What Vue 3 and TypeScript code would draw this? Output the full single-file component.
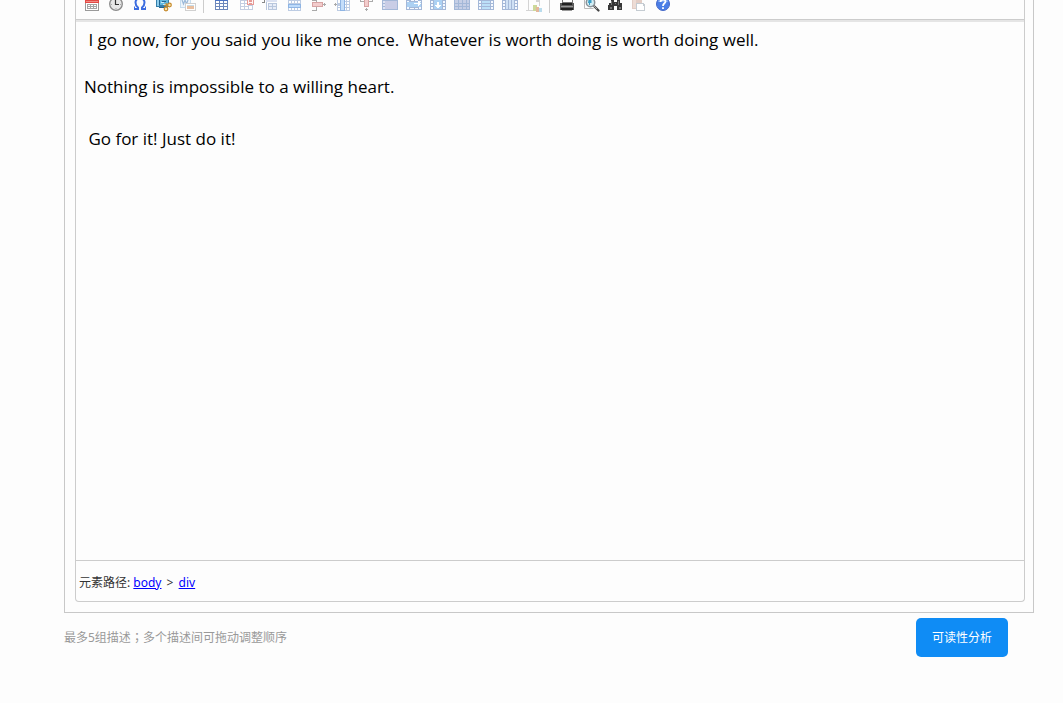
<script setup lang="ts">
import { ref } from 'vue'

interface Tool {
  id: string
  label: string
}

const groups: Tool[][] = [
  [
    { id: 'date', label: '日期' },
    { id: 'time', label: '时间' },
    { id: 'omega', label: '特殊字符' },
    { id: 'snap', label: '截图' },
    { id: 'word', label: 'Word图片转存' },
  ],
  [
    { id: 'table', label: '插入表格' },
    { id: 'deltable', label: '删除表格' },
    { id: 'title', label: '表格前插入行' },
    { id: 'insrow', label: '前插入行' },
    { id: 'delrow', label: '删除行' },
    { id: 'inscol', label: '前插入列' },
    { id: 'delcol', label: '删除列' },
    { id: 'merge', label: '合并单元格' },
    { id: 'mergeright', label: '右合并单元格' },
    { id: 'mergedown', label: '下合并单元格' },
    { id: 'splitcells', label: '完全拆分单元格' },
    { id: 'splitrows', label: '拆分成行' },
    { id: 'splitcols', label: '拆分成列' },
    { id: 'chart', label: '图表' },
  ],
  [
    { id: 'print', label: '打印' },
    { id: 'preview', label: '预览' },
    { id: 'search', label: '查询替换' },
    { id: 'paste', label: '粘贴' },
    { id: 'help', label: '帮助' },
  ],
]

const lines = ref<string[]>([
  '\u00a0I go now, for you said you like me once.\u00a0 Whatever is worth doing is worth doing well.',
  'Nothing is impossible to a willing heart.',
  '\u00a0Go for it! Just do it!',
])
</script>

<template>
  <main class="page">
    <section class="frame">
      <div class="editor">
        <div class="toolbar" role="toolbar">
          <div v-for="(group, g) in groups" :key="g" class="group">
            <button v-for="tool in group" :key="tool.id" type="button" class="tool" :aria-label="tool.label">
              <svg viewBox="0 0 16 12" width="16" height="12" aria-hidden="true" shape-rendering="crispEdges">
                <g v-if="tool.id === 'date'">
                  <path fill="#9a9a9a" d="M1 3h14v8H1z" />
                  <path fill="#e34a45" d="M1 0h14v3H1z" />
                  <path fill="#f08a84" d="M2 1h12v1H2z" />
                  <path fill="#fff" d="M2 3h12v7H2z" />
                  <path fill="#a5a5a5" d="M3 4h10v5H3z" />
                  <path fill="#fff" d="M4 5h2v1H4zM7 5h2v1H7zM10 5h2v1h-2zM4 7h2v1H4zM7 7h2v1H7zM10 7h2v1h-2z" />
                </g>
                <g v-else-if="tool.id === 'time'" shape-rendering="auto">
                  <circle cx="8" cy="4" r="6.3" fill="#e6e6e6" stroke="#8a8a8a" stroke-width="1.3" />
                  <path stroke="#aaa" d="M3 4.5h1M12 4.5h1M8 8v1" />
                  <path fill="none" stroke="#333" stroke-width="1.2" d="M7.5 0v4.5H11" />
                </g>
                <g v-else-if="tool.id === 'omega'" shape-rendering="auto">
                  <path fill="none" stroke="#3d6de0" stroke-width="2" d="M2 9h4V7.500C4 6 3.500 4.500 3.500 2.500C3.500-3 12.500-3 12.500 2.500C12.500 4.500 12 6 10 7.500V9h4" />
                  <path stroke="#3d6de0" d="M2.500 6.500v3M13.500 6.500v3" />
                </g>
                <g v-else-if="tool.id === 'snap'">
                  <path fill="#347eaa" d="M0 0h13v7H0z" />
                  <path fill="#8fcdec" d="M1 0h2v6H1z" />
                  <path fill="#62b8df" d="M4 0h8v5H4z" />
                  <path fill="#c5e9f9" d="M5 2h3v1H5zM7 4h3v1H7z" />
                  <path fill="#226491" d="M3 0h1v5H3zM6 1h4v1H6zM3 7h6v1H3z" />
                  <g fill="none" stroke="#c58a2c" stroke-width="1.2" shape-rendering="auto">
                    <path d="M8 5.500l5-1M10 3l1 5" />
                    <circle cx="13.500" cy="5" r="1.800" fill="#f9e6b0" />
                    <circle cx="10" cy="9" r="1.800" fill="#f9e6b0" />
                  </g>
                </g>
                <g v-else-if="tool.id === 'word'">
                  <path fill="#c6dcee" d="M0 0h11v8H0z" />
                  <path fill="#eef5fb" d="M1 0h9v7H1z" />
                  <path fill="none" stroke="#9cb9d8" stroke-width="1.2" shape-rendering="auto" d="M2 0l1.500 4L5 0l1.500 4L8 0" />
                  <path fill="#d0d0d0" d="M5 3h11v8H5z" />
                  <path fill="#fff" d="M6 4h9v6H6z" />
                  <path fill="#e9bf9f" d="M7 5h7v4H7z" />
                  <path fill="#c7ddea" d="M7 5h7v1H7z" />
                </g>
                <g v-else-if="tool.id === 'table'">
                  <path fill="#6c87bb" d="M1 0h13v10H1z" />
                  <path fill="#4c74c4" d="M1 0h13v1H1z" />
                  <path fill="#fff" d="M2 1h3v2H2zM6 1h3v2H6zM10 1h3v2h-3zM2 4h3v2H2zM6 4h3v2H6zM10 4h3v2h-3zM2 7h3v2H2zM6 7h3v2H6zM10 7h3v2h-3z" />
                </g>
                <g v-else-if="tool.id === 'deltable'">
                  <path fill="#c3cde1" d="M2 0h13v10H2z" />
                  <path fill="#fff" d="M3 1h3v2H3zM7 1h2v2H7zM3 4h3v2H3zM7 4h3v2H7zM11 6h3v1h-3zM3 7h3v2H3zM7 7h3v2H7zM11 7h3v2h-3z" />
                  <path fill="#e69a96" d="M9 0h7v5H9z" />
                  <path fill="#fff4f4" d="M10 0h1v2h3V0h1v4h-1V3h-3v1h-1z" />
                </g>
                <g v-else-if="tool.id === 'title'">
                  <path fill="#888" d="M2 0h1v2H2zM0 2h3v1H0z" />
                  <path fill="#b9c7dd" d="M4 0h1v10H4zM6 3h9v7H6z" />
                  <path fill="#dce2f2" d="M4 0h11v2H4z" />
                  <path fill="#e8edf8" d="M7 4h3v2H7zM11 4h3v2h-3zM7 7h3v2H7zM11 7h3v2h-3z" />
                </g>
                <g v-else-if="tool.id === 'insrow'">
                  <path fill="#bdcce3" d="M2 0h13v11H2z" />
                  <path fill="#fff" d="M3 1h2v2H3zM6 1h2v2H6zM9 1h2v2H9zM12 1h2v2h-2zM3 8h2v2H3zM6 8h2v2H6zM9 8h2v2H9zM12 8h2v2h-2z" />
                  <path fill="#8fb5e4" d="M2 4h13v4H2z" />
                  <path fill="#bedbfa" d="M3 5h11v2H3z" />
                </g>
                <g v-else-if="tool.id === 'delrow'">
                  <path fill="#aaa" d="M2 0h5v1H2zM6 0h1v3H6zM2 10h5v1H2zM6 7h1v3H6zM12 4h4v1h-4zM14 3h1v3h-1z" />
                  <path fill="#d7a3a3" d="M2 2h11v5H2z" />
                  <path fill="#f2cccc" d="M3 3h9v3H3z" />
                </g>
                <g v-else-if="tool.id === 'inscol'">
                  <path fill="#aaa" d="M0 4h4v1H0zM1 3h1v3H1z" />
                  <path fill="#bdcce3" d="M3 0h13v11H3z" />
                  <path fill="#fff" d="M4 0h2v3H4zM4 6h2v1H4zM4 8h2v2H4zM11 0h1v1h-1zM13 0h2v1h-2zM11 2h1v2h-1zM13 2h2v2h-2zM11 5h1v2h-1zM13 5h2v2h-2zM11 8h1v2h-1zM13 8h2v2h-2z" />
                  <path fill="#8fb5e4" d="M6 0h5v11H6z" />
                  <path fill="#c5defa" d="M7 0h3v10H7z" />
                </g>
                <g v-else-if="tool.id === 'delcol'">
                  <path fill="#aaa" d="M2 1h4v1H2zM2 0h1v2H2zM11 1h4v1h-4zM14 0h1v2h-1zM8 8h1v3H8zM7 9h3v1H7z" />
                  <path fill="#d7a3a3" d="M6 0h5v7H6z" />
                  <path fill="#f2cccc" d="M7 0h3v6H7z" />
                </g>
                <g v-else-if="tool.id === 'chart'">
                  <path fill="#d4d4d4" d="M2 0h1v10H2zM0 10h15v1H0zM10 0h4v2h-4zM13 0h1v6h-1z" />
                  <path fill="#ccd99a" d="M7 5h4v6H7z" />
                  <path fill="#e4b79c" d="M10 7h3v5h-3z" />
                  <path fill="#b9dced" d="M13 8h3v4h-3z" />
                </g>
                <g v-else-if="tool.id === 'print'">
                  <path fill="#777" d="M2 0h11v3H2z" />
                  <path fill="#fff" d="M3 0h9v2H3z" />
                  <path fill="#5a5a5a" d="M0 3h14v7H0z" />
                  <path fill="#222" d="M2 3h10v2H2zM1 8h12v2H1z" />
                  <path fill="#999" d="M1 6h12v1H1zM2 10h10v1H2z" />
                </g>
                <g v-else-if="tool.id === 'preview'" shape-rendering="auto">
                  <path fill="#fff" stroke="#bbb" d="M.5 0v8.500h9" />
                  <circle cx="6.500" cy="2.500" r="4.200" fill="#d3eef4" stroke="#8a9299" stroke-width="1.500" />
                  <path fill="#3d9fc8" d="M4.500 0h3v3H6v2H5V3H4z" />
                  <path stroke="#444" stroke-width="2.200" stroke-linecap="round" d="M10.500 6.500l4 4" />
                  <path stroke="#aaa" d="M10 6l3 3" />
                </g>
                <g v-else-if="tool.id === 'search'">
                  <path fill="#383838" d="M3 0h3v2h3V0h3v3h2v7H9V6H6v4H0V5h1V3h2z" />
                  <path fill="#777" d="M3 1h1v4H3zM10 1h1v4h-1zM2 7h2v2H2zM11 7h2v2h-2zM7 3h1v1H7z" />
                </g>
                <g v-else-if="tool.id === 'paste'">
                  <path fill="#e2cdc5" d="M0 0h10v9H0z" />
                  <path fill="#eddcd5" d="M1 0h3v8H1z" />
                  <path fill="#c5ccd2" d="M4 3h8v1h1v7H4z" />
                  <path fill="#fff" d="M5 4h6v2h1v4H5z" />
                </g>
                <g v-else-if="tool.id === 'help'" shape-rendering="auto">
                  <circle cx="7" cy="4" r="6.500" fill="#4b7ee6" stroke="#4468c8" />
                  <path fill="#7ba5f3" d="M2 2a5 4 0 0110 0z" />
                  <path fill="none" stroke="#fff" stroke-width="1.800" d="M4.500 2C4.500-1 9.500-1 9.500 1.500C9.500 3.500 7 3 7 6M7 7.200v1.800" />
                </g>
                <g v-else>
                  <path fill="#a4b8d8" d="M0 0h16v10H0z" />
                  <path fill="#f5f9ff" d="M1 1h2v2H1zM1 4h2v2H1zM1 7h2v2H1zM13 1h2v2h-2zM13 4h2v2h-2zM13 7h2v2h-2z" />
                  <g v-if="tool.id === 'merge'">
                    <path fill="#c9cde6" d="M4 1h11v8H4z" />
                    <path fill="#dfe4f3" d="M1 1h2v2H1zM1 4h2v2H1zM1 7h2v2H1z" />
                    <path fill="#c9cde6" d="M3 1h1v8H3z" />
                  </g>
                  <g v-else-if="tool.id === 'mergeright'">
                    <path fill="#f5f9ff" d="M5 0h3v1H5zM9 0h3v1H9zM4 8h4v1H4zM9 8h3v1H9z" />
                    <path fill="#acd1f3" d="M1 2h14v5H1z" />
                    <path fill="#fff" d="M8 3h4V1h1v1h1v1h1v1h-1v1h-1v1h-1V4H8z" />
                  </g>
                  <g v-else-if="tool.id === 'mergedown'">
                    <path fill="#acd1f3" d="M4 0h8v9H4z" />
                    <path fill="#fff" d="M7 2h2v3h2v1h-1v1H9v1H7V7H6V6H5V5h2z" />
                  </g>
                  <g v-else-if="tool.id === 'splitcells'">
                    <path fill="#c6cfe6" d="M1 0h3v3H1zM5 0h3v3H5zM9 0h3v3H9zM13 0h2v3h-2zM1 4h3v2H1zM5 4h3v2H5zM9 4h3v2H9zM13 4h2v2h-2zM1 7h3v2H1zM5 7h3v2H5zM9 7h3v2H9zM13 7h2v2h-2z" />
                  </g>
                  <g v-else-if="tool.id === 'splitrows'">
                    <path fill="#bce0f8" d="M4 1h8v2H4zM4 4h8v2H4zM4 7h8v2H4z" />
                  </g>
                  <g v-else>
                    <path fill="#cfe1f5" d="M4 0h2v9H4zM7 0h2v9H7zM10 0h2v9h-2z" />
                  </g>
                </g>
              </svg>
            </button>
          </div>
        </div>

        <div class="content" contenteditable="true" role="textbox" aria-multiline="true" aria-label="正文">
          <p v-for="(line, i) in lines" :key="i">{{ line }}</p>
        </div>

        <div class="path">元素路径: <a href="#body">body</a> <span class="gt">&gt;</span> <a href="#div">div</a></div>
      </div>
    </section>

    <div class="footer">
      <span class="hint">最多5组描述<span class="mark">；</span>多个描述间可拖动调整顺序</span>
      <button type="button" class="analyse">可读性分析</button>
    </div>
  </main>
</template>

<style>
body {
  background: #fdfdfd;
}
</style>

<style scoped>
.page {
  box-sizing: border-box;
  padding: 0 29px 0 64px;
  color: #333;
  font: 12px/20px "Noto Sans", "Noto Sans CJK SC", sans-serif;
}

.frame {
  padding: 0 8px 10px 10px;
  border: 1px solid #c8c8c8;
  border-top: 0;
}

.editor {
  border: 1px solid #ccc;
  border-top: 0;
  border-radius: 0 0 4px 4px;
}

.toolbar {
  display: flex;
  height: 19px;
  padding-left: 4px;
  border-bottom: 1px solid #ccc;
  box-shadow: 0 2px 0 #e5e5e5;
}

.group {
  display: flex;
}

.group + .group::before {
  content: "";
  width: 1px;
  height: 13px;
  margin: 0 6px 0 3px;
  background: #ccc;
}

.tool {
  display: flex;
  align-items: flex-start;
  width: 24px;
  height: 16px;
  padding: 0 4px;
  border: 0;
  background: none;
  cursor: pointer;
}

.content {
  min-height: 524px;
  padding: 8px;
  color: #000;
  font: 17px/23px "Open Sans", "Noto Sans", sans-serif;
  outline: none;
}

.content p {
  margin: 0 0 24px;
}

.content p:last-child {
  margin-top: 29px;
}

.path {
  padding: 12px 3px 8px;
  border-top: 1px solid #ccc;
}

.path a {
  color: #00f;
  text-decoration: underline;
}

.gt {
  margin: 0 2px;
}

.footer {
  display: flex;
  align-items: center;
  justify-content: space-between;
  padding: 5px 26px 0 0;
}

.hint {
  color: #999;
}

.mark {
  font-family: "Noto Sans CJK TC", sans-serif;
}

.analyse {
  height: 39px;
  padding: 0 16px;
  border: 0;
  border-radius: 5px;
  background: #0f8cf5;
  color: #fff;
  font: inherit;
  cursor: pointer;
}
</style>
